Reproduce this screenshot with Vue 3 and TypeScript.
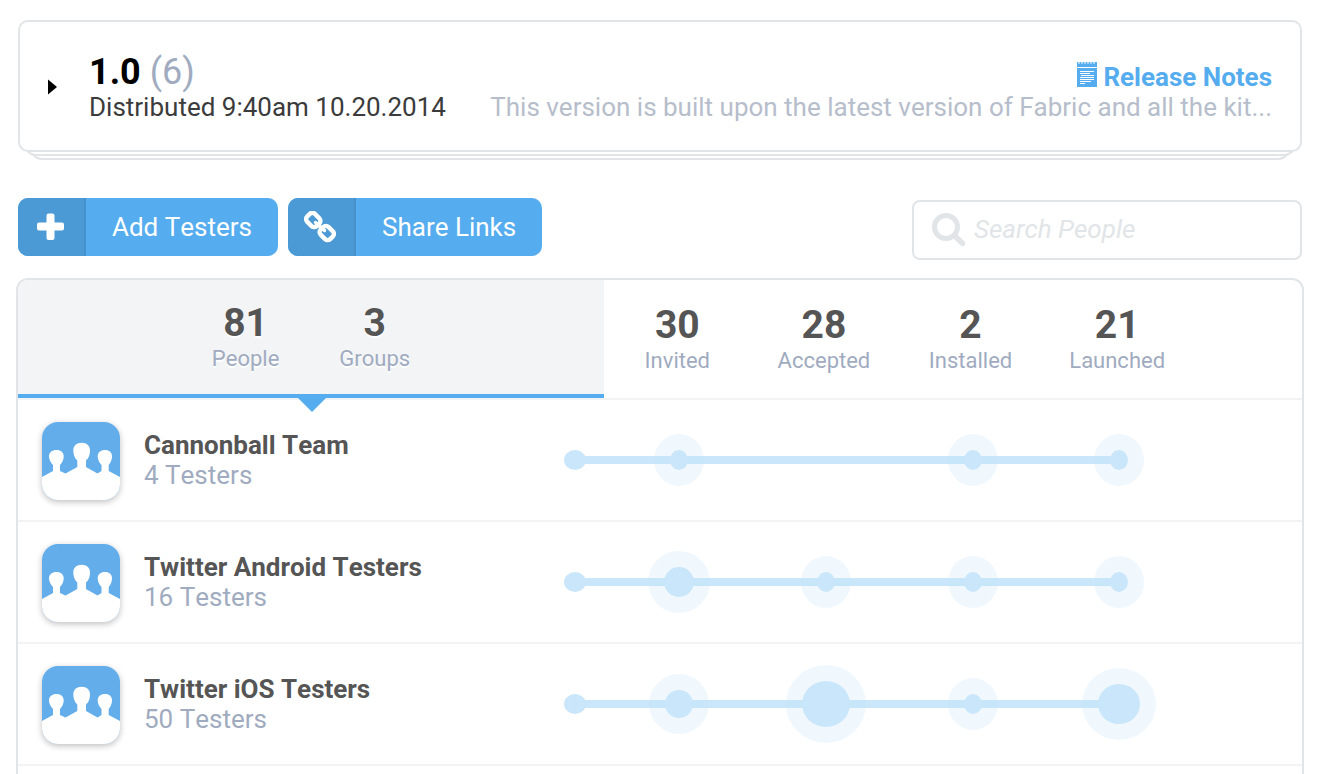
<script setup lang="ts">
import { ref } from 'vue'

interface Dot {
  w: number
  h: number
}

interface Group {
  name: string
  testers: number
  dots: (Dot | null)[]
}

const search = ref('')

const tabStats = [
  { value: 81, label: 'People' },
  { value: 3, label: 'Groups' },
]

const stages = [
  { value: 30, label: 'Invited' },
  { value: 28, label: 'Accepted' },
  { value: 2, label: 'Installed' },
  { value: 21, label: 'Launched' },
]

const small: Dot = { w: 18, h: 20 }

const groups: Group[] = [
  { name: 'Cannonball Team', testers: 4, dots: [small, null, small, small] },
  { name: 'Twitter Android Testers', testers: 16, dots: [{ w: 30, h: 30 }, small, small, small] },
  {
    name: 'Twitter iOS Testers',
    testers: 50,
    dots: [{ w: 28, h: 28 }, { w: 48, h: 46 }, small, { w: 42, h: 40 }],
  },
]

const HALO = 16

function coreStyle(dot: Dot) {
  return { width: `${dot.w}px`, height: `${dot.h}px` }
}

function haloStyle(dot: Dot) {
  return { width: `${dot.w + HALO * 2}px`, height: `${dot.h + HALO * 2}px` }
}
</script>

<template>
  <main class="page">
    <section class="version">
      <button class="disclosure" type="button" aria-label="Show version details">
        <svg width="9" height="16" viewBox="0 0 9 16"><path d="M0 0.5L9 8L0 15.5Z" fill="#000" /></svg>
      </button>
      <div class="version-info">
        <h1 class="version-title">1.0 <span class="build">(6)</span></h1>
        <p class="distributed">Distributed 9:40am 10.20.2014</p>
      </div>
      <div class="notes">
        <a class="notes-link" href="#">
          <svg width="20" height="26" viewBox="0 0 20 26">
            <path
              d="M0 0H1.4V1.8H2.6V0H4.4V1.8H5.6V0H7.4V1.8H8.6V0H10.4V1.8H11.6V0H13.4V1.8H14.6V0H16.4V1.8H17.6V0H20V5H0Z"
              fill="#55acee"
            />
            <path d="M0 6H20V25H0Z" fill="#55acee" />
            <path
              d="M3 9.5H17M3 11.5H13M4 13.5H17M3 15.5H17M3 17.5H17M3 19.5H14M3 21.5H8"
              stroke="#fff"
              stroke-width="1"
            />
          </svg>
          Release Notes
        </a>
        <p class="notes-text">This version is built upon the latest version of Fabric and all the kit...</p>
      </div>
    </section>

    <div class="toolbar">
      <div class="actions">
        <button class="action" type="button">
          <span class="action-icon">
            <svg width="27" height="28" viewBox="0 0 27 28">
              <path
                d="M11.5 0.5H15.5Q17.5 0.5 17.5 2.5V9.5H25Q27 9.5 27 11.5V15.5Q27 17.5 25 17.5H17.500V25Q17.5 27 15.5 27H11.5Q9.5 27 9.5 25V17.5H2Q0 17.5 0 15.5V11.5Q0 9.5 2 9.5H9.5V2.5Q9.5 0.5 11.5 0.5Z"
                fill="#fff"
              />
            </svg>
          </span>
          <span class="action-label">Add Testers</span>
        </button>
        <button class="action" type="button">
          <span class="action-icon">
            <svg width="32" height="32" viewBox="0 0 32 32" fill="none" stroke="#fff" stroke-width="4.4">
              <rect x="2.5" y="3.500" width="13.5" height="11" rx="3.6" transform="rotate(45 9.25 9)" />
              <rect x="16" y="16.500" width="13.5" height="11" rx="3.6" transform="rotate(45 22.75 22)" />
              <path d="M11.5 11.5L20.500 19.500" stroke-width="3.4" stroke-linecap="round" />
            </svg>
          </span>
          <span class="action-label">Share Links</span>
        </button>
      </div>
      <label class="search">
        <svg width="34" height="34" viewBox="0 0 34 34" fill="none" stroke="#e1e5e8">
          <circle cx="14" cy="14" r="11.5" stroke-width="5" />
          <path d="M22.5 22.5L30.5 30.5" stroke-width="5.4" stroke-linecap="round" />
        </svg>
        <input v-model="search" type="text" placeholder="Search People" aria-label="Search People" />
      </label>
    </div>

    <section class="panel">
      <table class="testers">
        <colgroup>
          <col class="col-group" />
          <col v-for="stage in stages" :key="stage.label" class="col-stage" />
          <col />
        </colgroup>
        <thead>
          <tr>
            <th scope="col">
              <div class="tab">
                <div v-for="stat in tabStats" :key="stat.label" class="stat">
                  <span class="value">{{ stat.value }}</span>
                  <span class="label">{{ stat.label }}</span>
                </div>
              </div>
            </th>
            <th v-for="stage in stages" :key="stage.label" scope="col">
              <div class="stat">
                <span class="value">{{ stage.value }}</span>
                <span class="label">{{ stage.label }}</span>
              </div>
            </th>
            <td></td>
          </tr>
        </thead>
        <tbody>
          <tr v-for="group in groups" :key="group.name">
            <th scope="row">
              <div class="group">
                <svg class="avatar" width="78" height="78" viewBox="0 0 78 78">
                  <rect width="78" height="78" fill="#62adea" />
                  <path
                    d="M0 55L11 49V43C8.500 40.500 7 37 7 34.500C7 30.500 10 28 14.500 28C19 28 21.700 30.500 21.700 34.500C21.700 37 20.500 40.500 18 43V49L23.500 51.500L35.300 45V38.500C32.500 36 31.300 32 31.300 28.500C31.300 23.500 34.500 20.700 39.700 20.700C44.800 20.700 48 23.500 48 28.500C48 32 47 36 44 38.500V45L55.500 51.500L59.500 49V43C57 40.500 55.700 37 55.700 34.500C55.700 30.500 58.500 28 63 28C67.500 28 70 30.500 70 34.500C70 37 69 40.500 66.700 43V49L78 55V78H0Z"
                    fill="#fff"
                  />
                </svg>
                <div class="group-text">
                  <span class="group-name">{{ group.name }}</span>
                  <span class="group-count">{{ group.testers }} Testers</span>
                </div>
                <span class="start"></span>
              </div>
            </th>
            <td v-for="(dot, i) in group.dots" :key="i">
              <div class="track" :class="{ last: i === group.dots.length - 1 }">
                <span v-if="dot" class="halo" :style="haloStyle(dot)">
                  <span class="core" :style="coreStyle(dot)"></span>
                </span>
              </div>
            </td>
            <td></td>
          </tr>
        </tbody>
      </table>
    </section>
  </main>
</template>

<style>
body {
  background: #fff;
}
</style>

<style scoped>
.page {
  box-sizing: border-box;
  min-height: 100vh;
  padding: 20px 18px 0 16px;
  display: flex;
  flex-direction: column;
  font-family: Roboto, "Liberation Sans", sans-serif;
  font-size: 26px;
  line-height: 30px;
  font-kerning: none;
  color: #555;
}

h1,
p {
  margin: 0;
}

button,
input {
  font: inherit;
  font-kerning: inherit;
  border: 0;
  padding: 0;
  background: none;
}

svg {
  display: block;
  flex: none;
}

.version {
  position: relative;
  z-index: 0;
  display: flex;
  align-items: flex-end;
  margin: 0 2px;
  padding: 30px 28px 28px;
  background: #fff;
  border: 2px solid #e1e5e8;
  border-radius: 10px;
}

.version,
.search {
  box-sizing: border-box;
}

.version::before,
.version::after {
  content: "";
  position: absolute;
  z-index: -1;
  height: 16px;
  border: 2px solid #e1e5e8;
  border-top: 0;
  border-radius: 0 0 12px 12px;
  clip-path: inset(12px 0 0 0);
}

.version::before {
  left: 4px;
  right: 4px;
  bottom: -6px;
}

.version::after {
  left: 10px;
  right: 10px;
  bottom: -10px;
}

.disclosure {
  display: flex;
  align-self: center;
  width: 41px;
}

.version-info {
  flex: none;
}

.version-title {
  font-size: 36px;
  line-height: 40px;
  color: #000;
}

.build {
  font-weight: 400;
  color: #a0abbf;
}

.distributed {
  color: #3b3b3b;
}

.notes {
  flex: 1;
  min-width: 0;
  display: flex;
  flex-direction: column;
  align-items: flex-end;
}

.notes-link {
  display: flex;
  gap: 6px;
  font-weight: 700;
  color: #55acee;
  text-decoration: none;
}

.notes-text {
  color: #b6bdcb;
  white-space: nowrap;
}

.toolbar {
  display: flex;
  justify-content: space-between;
  margin: 46px 2px 18px;
}

.actions {
  display: flex;
  align-items: flex-start;
  gap: 10px;
}

.action {
  display: flex;
  height: 58px;
  border-radius: 10px;
  overflow: hidden;
  background: #55acee;
  color: #fff;
  cursor: pointer;
}

.action-icon {
  box-sizing: border-box;
  width: 68px;
  height: 58px;
  display: flex;
  align-items: center;
  justify-content: center;
  padding-right: 2px;
  background: #4c9ad5;
  border-right: 2px solid #4691ca;
}

.action-label {
  padding: 14px 26px;
}

.search {
  display: flex;
  align-items: center;
  gap: 8px;
  width: 390px;
  height: 60px;
  margin-top: 2px;
  padding: 0 18px;
  border: 2px solid #e1e5e8;
  border-radius: 8px;
}

.search input {
  flex: 1;
  min-width: 0;
  height: 30px;
  padding-bottom: 2px;
  outline: 0;
  color: #555;
}

.search input::placeholder {
  font-style: italic;
  color: #e1e5e8;
  opacity: 1;
}

.panel {
  flex: 1;
  border: 2px solid #e1e5e8;
  border-bottom: 0;
  border-radius: 12px 12px 0 0;
}

.testers {
  width: 100%;
  table-layout: fixed;
  border-collapse: separate;
  border-spacing: 0;
}

.col-group {
  width: 586px;
}

.col-stage {
  width: 11.42%;
}

.testers th,
.testers td {
  padding: 0;
  border-bottom: 2px solid #f2f3f4;
  font-weight: 400;
}

.tab {
  position: relative;
  box-sizing: border-box;
  height: 118px;
  display: flex;
  align-items: center;
  justify-content: center;
  gap: 60px;
  background: #f2f4f6;
  border-bottom: 4px solid #55acee;
  border-top-left-radius: 10px;
  text-shadow: 0 2px 0 #fff;
}

.tab::after {
  content: "";
  position: absolute;
  top: 100%;
  left: 50%;
  margin: 4px 0 0 -13px;
  border: 14px solid transparent;
  border-top-color: #55acee;
  border-bottom: 0;
}

.stat {
  display: flex;
  flex-direction: column;
  align-items: center;
  padding-bottom: 2px;
}

.value {
  font-size: 39px;
  line-height: 46px;
  font-weight: 700;
}

.label {
  font-size: 22px;
  line-height: 26px;
  color: #a0abbf;
}

.group {
  height: 120px;
  display: flex;
  align-items: center;
  padding-left: 24px;
  text-align: left;
}

.avatar {
  margin-top: 2px;
  border-radius: 16px;
  box-shadow: 0 2px 6px rgba(0, 0, 0, 0.25);
}

.group-text {
  flex: 1;
  margin-left: 24px;
  display: flex;
  flex-direction: column;
}

.group-name {
  font-weight: 700;
}

.group-count {
  color: #a0abbf;
}

.start {
  display: flex;
  align-items: center;
  width: 40px;
  height: 20px;
  background: linear-gradient(#c9e6fa, #c9e6fa) 11px 6px / 100% 8px no-repeat;
}

.start::before {
  content: "";
  width: 22px;
  height: 20px;
  border-radius: 50%;
  background: #c9e6fa;
}

.track {
  height: 120px;
  display: flex;
  align-items: center;
  justify-content: center;
  padding-left: 4px;
  background: linear-gradient(#c9e6fa, #c9e6fa) left center / 100% 8px no-repeat;
}

.track.last {
  background-size: 50% 8px;
}

.halo {
  flex: none;
  display: flex;
  align-items: center;
  justify-content: center;
  border-radius: 50%;
  background: rgba(201, 230, 250, 0.27);
}

.core {
  border-radius: 50%;
  background: #c9e6fa;
}
</style>
